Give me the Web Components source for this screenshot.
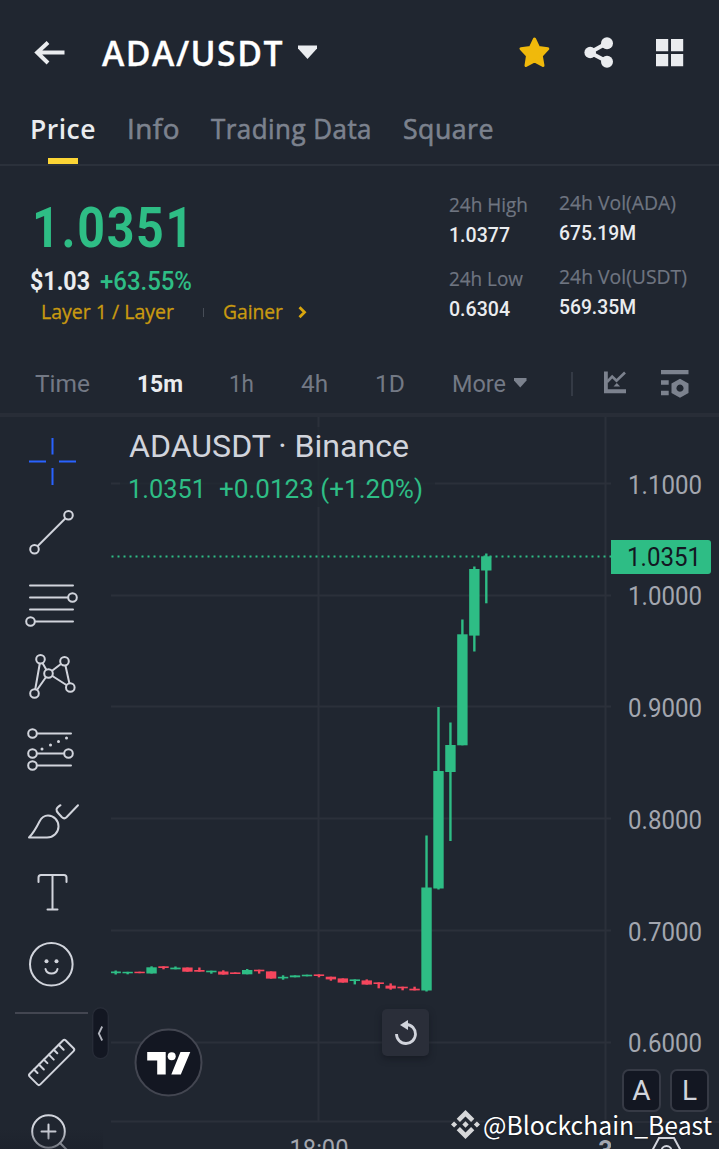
<!DOCTYPE html>
<html lang="en">
<head>
<meta charset="utf-8">
<title>ADA/USDT</title>
<style>
  html, body {
    margin: 0;
    background: #202630;
  }
  body {
    width: 719px;
    height: 1149px;
    overflow: hidden;
    font-family: "Open Sans", "Noto Sans", sans-serif;
    color: #eaecef;
  }
</style>
</head>
<body>
<trade-page></trade-page>

<script>
// Text that is squeezed or stretched to a fixed width
class FitText extends HTMLElement {
  constructor() {
    super();
    this.attachShadow({ mode: 'open' });
  }

  connectedCallback() {
    const width = +this.getAttribute('w');
    this.shadowRoot.innerHTML = /* html */`
    <style>
      :host { display: block; flex: none; width: ${width}px; white-space: nowrap; }
      span { display: inline-block; vertical-align: top; transform-origin: 0 50%; }
    </style>
    <span><slot></slot></span>`;
    const span = this.shadowRoot.querySelector('span');
    const natural = span.getBoundingClientRect().width;
    if (natural) span.style.transform = `scaleX(${width / natural})`;
  }
}

class TopBar extends HTMLElement {
  constructor() {
    super();
    this.attachShadow({ mode: 'open' });
  }

  connectedCallback() {
    this.shadowRoot.innerHTML = /* html */`
    <style>
      :host { display: flex; align-items: center; height: 105px; padding: 0 34px; fill: #eaecef; }
      svg { display: block; flex: none; }
      fit-text { margin: 0 14px 0 36px; font-size: 34px; font-weight: 600; line-height: 48px; letter-spacing: 1.500px; color: #fff; -webkit-text-stroke: .300px; }
      .actions { display: flex; align-items: center; gap: 34px; margin-left: auto; }
    </style>
    <svg width="32" height="24" viewBox="0 0 32 24" fill="none" stroke="#eaecef" stroke-width="4"><path d="M30.500 11.500H4M14 1.500 3.200 11.500 14 22"/></svg>
    <fit-text w="182">ADA/USDT</fit-text>
    <svg width="20" height="16" viewBox="0 0 20 16"><path d="M0 .500h19v3L9.500 14 0 3.500z"/></svg>
    <div class="actions">
      <svg width="32" height="32" viewBox="0 0 32 32"><path fill="#f0b90b" stroke="#f0b90b" stroke-width="3" stroke-linejoin="round" d="m16.500 2 4 8.500 9.300 1.200-6.500 7 1.700 9.800L16.500 24 8 28.500l1.500-9.800-6.500-7 9.500-1.200z"/></svg>
      <svg width="30" height="32" viewBox="0 0 30 32"><path d="M6 15.500 23 6M6 15.500l17 9" stroke="#eaecef" stroke-width="4"/><circle cx="6.200" cy="15.500" r="5.800"/><circle cx="23" cy="6.200" r="6"/><circle cx="23" cy="24.800" r="6"/></svg>
      <svg width="37" height="28" viewBox="-8 0 37 28"><path d="M0 0h12.200v12.200H0zM15 0h12.200v12.200H15zM0 15h12.200v12.200H0zM15 15h12.200v12.200H15z"/></svg>
    </div>`;
  }
}

class TabItem extends HTMLElement {
  constructor() {
    super();
    this.attachShadow({ mode: 'open' });
  }

  connectedCallback() {
    this.shadowRoot.innerHTML = /* html */`
    <style>
      :host { display: flex; flex-direction: column; align-items: center; color: #7c828e; }
      :host([active]) { color: #eaecef; }
      fit-text { height: 47px; line-height: 47px; font-size: 27px; font-weight: 500; letter-spacing: .500px; -webkit-text-stroke: .600px; }
      :host([active]) fit-text { font-weight: 600; -webkit-text-stroke: 0; }
      i { display: none; width: 30px; height: 6px; margin-top: 6px; background: #fcd535; }
      :host([active]) i { display: block; }
    </style>
    <fit-text w="${this.getAttribute('w')}">${this.textContent}</fit-text>
    <i></i>`;
  }
}

class PriceSummary extends HTMLElement {
  constructor() {
    super();
    this.attachShadow({ mode: 'open' });
  }

  stat(label, labelWidth, value, valueWidth) {
    return `<fit-text class="label" w="${labelWidth}">${label}</fit-text>
      <fit-text class="value" w="${valueWidth}">${value}</fit-text>`;
  }

  connectedCallback() {
    this.shadowRoot.innerHTML = /* html */`
    <style>
      :host { display: flex; height: 161px; padding: 28px 0 0 30px; }
      .left { width: 419px; }
      .price { height: 67px; padding-left: 2px; color: #2ebd85; font: 700 56px/68px Roboto, sans-serif; letter-spacing: 2px; }
      .change { display: flex; gap: 10px; height: 41px; font: 700 25px/42px Roboto, sans-serif; }
      .change .up { font-weight: 500; color: #2ebd85; }
      .tags { display: flex; align-items: center; height: 21px; padding-left: 11px; font-size: 19.500px; font-weight: 500; line-height: 20px; color: #c99a10; -webkit-text-stroke: .300px; }
      .tags fit-text { margin-top: -1px; }
      .tags i { width: 1px; height: 9px; margin: 0 19px 0 29px; background: #474d57; }
      .tags svg { margin: -1px 0 0 15px; }
      .col { display: flex; flex-direction: column; margin-top: -3px; }
      .col + .col { margin: -5.500px 0 0 31px; }
      .label { font-size: 19.500px; line-height: 28px; height: 29px; color: #6f7581; -webkit-text-stroke: .200px; }
      .value { font: 500 20px/30px Roboto, sans-serif; height: 29px; }
      .value:nth-of-type(2) { margin-bottom: 16px; }
    </style>
    <div class="left">
      <div class="price"><fit-text w="163">1.0351</fit-text></div>
      <div class="change"><fit-text w="60">$1.03</fit-text><fit-text class="up" w="92">+63.55%</fit-text></div>
      <div class="tags">
        <fit-text w="133">Layer 1 / Layer</fit-text><i></i><fit-text w="60">Gainer</fit-text>
        <svg width="10" height="14" viewBox="0 0 10 14" fill="none" stroke="#d9a60e" stroke-width="2.800"><path d="m1.500 2.200 5 5-5 5"/></svg>
      </div>
    </div>
    <div class="col">
      ${this.stat('24h High', 79, '1.0377', 61)}
      ${this.stat('24h Low', 74, '0.6304', 61)}
    </div>
    <div class="col">
      ${this.stat('24h Vol(ADA)', 117, '675.19M', 77)}
      ${this.stat('24h Vol(USDT)', 128, '569.35M', 77)}
    </div>`;
  }
}

class IntervalBar extends HTMLElement {
  constructor() {
    super();
    this.attachShadow({ mode: 'open' });
  }

  connectedCallback() {
    this.shadowRoot.innerHTML = /* html */`
    <style>
      :host { display: flex; align-items: center; height: 58px; padding-left: 35px; border-bottom: 4px solid #282d37; font: 400 24px/60px Roboto, sans-serif; color: #737985; fill: #7c828e; }
      b { display: block; margin: 0 46px 0 47px; color: #eaecef; }
      fit-text + fit-text { margin-left: 47px; }
      svg { flex: none; }
      .caret { margin: -3px 44px 0 8px; }
      i { width: 2px; height: 24px; background: #343a45; }
      .chart { margin: -3px 34px 0 31px; }
    </style>
    <fit-text w="55">Time</fit-text>
    <b><fit-text w="46">15m</fit-text></b>
    <fit-text w="25">1h</fit-text>
    <fit-text w="27">4h</fit-text>
    <fit-text w="30">1D</fit-text>
    <fit-text w="54">More</fit-text>
    <svg class="caret" width="13" height="10" viewBox="0 0 13 10"><path d="M0 0h12.500v2.500L6.250 9.500 0 2.500z"/></svg>
    <i></i>
    <svg class="chart" width="23" height="23" viewBox="0 0 23 23"><path d="M0 .500h3.800v17.700H22v4H0z"/><path d="m3 11 5.200-5.500 4.300 4.200L21 1.500" fill="none" stroke="#7c828e" stroke-width="2.600"/><path d="m9.500 15.500 3.300-3.500 3.300 3.500z"/></svg>
    <svg width="28" height="29" viewBox="0 .7 28 29"><path d="M0 0h27.500v5H0zM0 11h7.700v4.500H0zM0 21.500h7.700v4.500H0z"/><path fill-rule="evenodd" d="m19 9.500 8.500 4.800v9.400L19 28.500l-8.500-4.800v-9.400zm0 5.800a3.600 3.600 0 1 0 .01 0z"/></svg>`;
  }
}

class DrawingToolbar extends HTMLElement {
  constructor() {
    super();
    this.attachShadow({ mode: 'open' });
  }

  tool(shapes) {
    return `<svg width="104" height="72" viewBox="0 0 104 72">${shapes}</svg>`;
  }

  knob(x, y) {
    return `<circle cx="${x}" cy="${y}" r="4.300" fill="#202630"/>`;
  }

  connectedCallback() {
    const k = this.knob;
    this.shadowRoot.innerHTML = /* html */`
    <style>
      :host { display: block; position: relative; height: 724px; padding-top: 8px; overflow: hidden; }
      svg { display: block; fill: none; stroke: #d1d4dc; stroke-width: 2; stroke-linecap: round; stroke-linejoin: round; }
      hr { width: 73px; height: 2px; margin: 11px 0 12px 15px; border: 0; background: #434651; }
      .fade { position: absolute; left: 0; bottom: 0; width: 103px; height: 20px; background: linear-gradient(#20263000, #1b202a90); }
    </style>
    ${this.tool('<path stroke="#2962ff" stroke-linecap="butt" d="M52.500 13v16.500M52.500 43v17M29 36.500h17M59 36.500h17"/>')}
    ${this.tool(`<path d="m34.500 52.300 34-34"/>${k(34.5, 52.3)}${k(68.5, 18.3)}`)}
    ${this.tool(`<path d="M30 16.500h43M30 28.500h38M30 40.500h43M35 52.500h38"/>${k(72.5, 28.5)}${k(30.5, 52.5)}`)}
    ${this.tool(`<path d="m34.500 52.500 6-34 8 14 16-12.200 5.800 26.200-21.800-14z"/>${k(40.5, 18.3)}${k(64.5, 20.3)}${k(48.5, 32.5)}${k(34.5, 52.5)}${k(70.3, 46.5)}`)}
    ${this.tool(`<path d="M36 20.500h35M36 40.500h30M36 52.500h35"/><path stroke-width="3" d="M42 36h.01M50.500 32h.01M58.500 28.500h.01M66.500 25h.01"/>${k(32.5, 20.5)}${k(32.5, 40.5)}${k(68.5, 40.5)}${k(32.5, 52.5)}`)}
    ${this.tool('<path d="M29 52.500c5-5 7.500-10 10.500-16 2-4 4.500-6 8.500-6 6 0 10.500 5 10.500 11s-5 11-11.500 11zM60.500 20.200c-5 3.300-5 5-2 8.300l3.500 3.800c1.500 1.500 3 1.500 4.500 0L78 20.200"/>')}
    ${this.tool('<path d="M38.500 25v-4.500c0-1.800.8-2.500 2.500-2.500h23c1.700 0 2.500.7 2.500 2.500V25M52.500 18v34.500M47.500 52.500h10"/>')}
    ${this.tool('<circle cx="51.300" cy="35.300" r="21.300"/><path d="M45.500 40c1.500 6 10.500 6 12 0"/><g fill="#d1d4dc" stroke="none"><circle cx="46.500" cy="32.300" r="2"/><circle cx="56.500" cy="32.300" r="2"/></g>')}
    <hr>
    ${this.tool('<g transform="rotate(-45 51.500 36.300)"><rect x="26" y="29" width="51" height="15" rx="2"/><path d="M34 29v5M41 29v7M48 29v5M55 29v7M62 29v5M69 29v7"/></g>')}
    ${this.tool('<circle cx="48.500" cy="33.500" r="16.300"/><path d="M41.500 33.500h14M48.500 26.500v14M60 45l8 8"/>')}
    <div class="fade"></div>`;
  }
}

class CandleChart extends HTMLElement {
  constructor() {
    super();
    this.attachShadow({ mode: 'open' });
  }

  // [colour, body top, body bottom, wick top, wick bottom]
  static get candles() {
    return [
      ['g', 971.5, 973.2, 970.5, 974.5], ['g', 971.8, 973.3, 971.8, 974.3], ['r', 971.7, 973.2],
      ['g', 967.3, 973.5, 966.3], ['r', 966.3, 968, 966.3, 969.3], ['g', 967.6, 969.3, 966.5],
      ['r', 967.5, 971.7], ['r', 970, 971.7, 967.5], ['g', 970.7, 972.3, 970.7, 973.7],
      ['r', 971.5, 974.6, 970.3], ['r', 972.4, 974], ['g', 970, 974.3, 969],
      ['r', 969.7, 971.3, 969.7, 973.6], ['r', 971.4, 978.6], ['g', 976.8, 978.4, 975.3, 979.7],
      ['g', 975.4, 977.3], ['g', 974.7, 976.3], ['r', 974.4, 976, 974.4, 977.3],
      ['r', 976.7, 979.4, 976.7, 980.7], ['r', 978.4, 982.6], ['g', 979.4, 981, 979.4, 984.4],
      ['r', 980.4, 984.6, 979.4], ['r', 982.4, 984, 982.4, 988.3], ['r', 985.6, 988.6, 983.4, 989.7],
      ['r', 986.7, 988.3, 986.7, 990.3], ['r', 988.7, 990.4, 986.7], ['g', 887.5, 990.5, 835.5, 991.5],
      ['g', 771, 888.5, 707, 889.5], ['g', 745, 772, 722.5, 841], ['g', 634.3, 745.3, 619.5],
      ['g', 569, 635.6, 566.5, 651.5], ['g', 556.3, 570.5, 553.5, 603.3],
    ];
  }

  prepareCandles() {
    return CandleChart.candles.map(([color, top, bottom, high = top, low = bottom], i) => {
      const x = 115.7 + i * 11.955;
      return `<g fill="${color === 'g' ? '#2ebd85' : '#f6465d'}">
        <rect x="${x - 1.2}" y="${high}" width="2.4" height="${low - high}"/>
        <rect x="${x - 5.2}" y="${top}" width="10.4" height="${bottom - top}"/></g>`;
    }).join('');
  }

  connectedCallback() {
    this.shadowRoot.innerHTML = /* html */`
    <style>
      :host { display: block; position: relative; }
      svg { display: block; }
      .legend { position: absolute; left: 16px; top: 10px; padding-left: 8px; width: 307px; height: 80px; background: #202630c0; font-family: Roboto, sans-serif; }
      .name { height: 39px; font-size: 30.500px; line-height: 40px; color: #d1d4dc; padding-left: 1px; }
      .values { display: flex; gap: 13px; font-size: 25.500px; line-height: 46px; color: #2ebd85; }
      .reset { position: absolute; left: 278px; top: 592px; width: 47px; height: 47px; border-radius: 5px; background: #2a2e39; box-shadow: 0 3px 6px #12161e99; }
      .toggle { position: absolute; left: -12px; top: 590px; }
      .logo { position: absolute; left: 30px; top: 611px; }
    </style>
    <svg width="507" height="732" viewBox="104 417 507 732">
      <path stroke="#2b303a" stroke-width="2" d="M318.500 417v704M605.500 417v704M111 483.500h500M111 595.500h500M111 706.500h500M111 818.500h500M111 930.500h500M111 1042.500h500M111 1121.500h500"/>
      <path stroke="#2ebd85" stroke-width="2" stroke-dasharray="2 4" d="M111.500 556.500h500"/>
      <svg x="111" y="417" width="500" height="732" viewBox="111 417 500 732">${this.prepareCandles()}</svg>
      <g font-family="Roboto, sans-serif" font-size="25" fill="#a3a6af" text-anchor="middle">
        <text x="319" y="1158" textLength="59" lengthAdjust="spacingAndGlyphs">18:00</text>
        <text x="605.500" y="1159" font-weight="700">3</text>
      </g>
    </svg>
    <div class="legend">
      <div class="name"><fit-text w="280">ADAUSDT · Binance</fit-text></div>
      <div class="values"><fit-text w="78">1.0351</fit-text><fit-text w="204">+0.0123 (+1.20%)</fit-text></div>
    </div>
    <div class="reset">
      <svg width="47" height="47" viewBox="0 0 47 47"><path d="M24.500 15.500a9.500 9.500 0 1 1-10 9.500" fill="none" stroke="#d1d4dc" stroke-width="2.800"/><path fill="#d1d4dc" d="m18 16 8-5v10z"/></svg>
    </div>
    <svg class="toggle" width="17" height="53" viewBox="0 0 17 53"><rect x=".700" y=".700" width="15.600" height="51" rx="7.800" fill="#131722" stroke="#272c37" stroke-width="1.400"/><path d="m10.200 19.500-3.400 7 3.400 7" fill="none" stroke="#b2b5be" stroke-width="1.800"/></svg>
    <svg class="logo" width="69" height="69" viewBox="0 0 69 69"><circle cx="34.500" cy="34.500" r="33" fill="#131722" stroke="#434651" stroke-width="2"/><path fill="#fff" d="M13.200 24h18.500v22.500h-8.500V32.500h-10zM46.500 24h9.800l-9.500 22.500h-9.500z"/><circle cx="37.700" cy="28.300" r="4" fill="#fff"/></svg>`;
  }
}

class PriceAxis extends HTMLElement {
  constructor() {
    super();
    this.attachShadow({ mode: 'open' });
  }

  connectedCallback() {
    const prices = ['1.1000', '1.0000', '0.9000', '0.8000', '0.7000', '0.6000'];
    this.shadowRoot.innerHTML = /* html */`
    <style>
      :host { display: block; position: relative; height: 732px; font: 400 25px/111.800px Roboto, sans-serif; color: #a3a6af; overflow: hidden; }
      .prices { display: flex; flex-direction: column; box-sizing: border-box; height: 706px; padding: 12.500px 0 0 16.500px; border-bottom: 2px solid #292e38; }
      .prices fit-text { height: 111.800px; }
      .tag { position: absolute; left: 0; top: 123px; width: 84px; height: 33.500px; line-height: 36px; padding-left: 16px; border-radius: 0 3px 3px 0; background: #2ebd85; color: #131722; }
      .modes { position: absolute; left: 11px; top: 652px; display: flex; gap: 9px; }
      .modes span { box-sizing: border-box; width: 39px; height: 43px; border: 2px solid #363a45; border-radius: 7px; background: #131722; color: #d1d4dc; font-size: 28px; line-height: 39px; text-align: center; }
      svg { position: absolute; left: 39px; top: 719px; }
    </style>
    <div class="prices">${prices.map(p => `<fit-text w="74">${p}</fit-text>`).join('')}</div>
    <div class="tag"><fit-text w="74">1.0351</fit-text></div>
    <div class="modes"><span>A</span><span>L</span></div>
    <svg width="34" height="26" viewBox="0 0 34 26" fill="none" stroke="#d1d4dc" stroke-width="2"><path d="m2 15 7-13h15l7 13-7 13H9z"/><circle cx="16.500" cy="15" r="5"/></svg>`;
  }
}

class WaterMark extends HTMLElement {
  constructor() {
    super();
    this.attachShadow({ mode: 'open' });
  }

  connectedCallback() {
    this.shadowRoot.innerHTML = /* html */`
    <style>
      :host { display: flex; align-items: center; gap: 3px; font: 400 25px/28px "Noto Sans CJK SC", sans-serif; color: #fff; text-shadow: 0 0 2px #0008; }
      fit-text { margin-top: -2px; }
    </style>
    <svg width="29" height="29" viewBox="0 0 28 28" fill="#d6d7d9"><path d="m14 0 8.500 8.500-3.100 3.100L14 6.200l-5.400 5.400-3.100-3.100zM14 28l8.500-8.500-3.100-3.100-5.400 5.400-5.400-5.400-3.100 3.100zM3 11l3 3-3 3-3-3zM25 11l3 3-3 3-3-3zM14 10.900l3.100 3.100-3.100 3.100-3.100-3.100z"/></svg>
    <fit-text w="229">@Blockchain_Beast</fit-text>`;
  }
}

class TradePage extends HTMLElement {
  constructor() {
    super();
    this.attachShadow({ mode: 'open' });
  }

  connectedCallback() {
    this.shadowRoot.innerHTML = /* html */`
    <style>
      :host { display: block; position: relative; width: 719px; height: 1149px; overflow: hidden; }
      nav { display: flex; gap: 31px; height: 59px; padding-left: 30px; border-bottom: 2px solid #2b313b; }
      main { display: grid; grid-template-columns: 104px 507px 108px; height: 732px; }
      main > * { min-width: 0; }
      water-mark { position: absolute; left: 451px; top: 1110px; }
    </style>
    <top-bar></top-bar>
    <nav>
      <tab-item w="66" active>Price</tab-item>
      <tab-item w="53">Info</tab-item>
      <tab-item w="161">Trading Data</tab-item>
      <tab-item w="91">Square</tab-item>
    </nav>
    <price-summary></price-summary>
    <interval-bar></interval-bar>
    <main>
      <drawing-toolbar></drawing-toolbar>
      <candle-chart></candle-chart>
      <price-axis></price-axis>
    </main>
    <water-mark></water-mark>`;
  }
}

customElements.define('fit-text', FitText);
customElements.define('top-bar', TopBar);
customElements.define('tab-item', TabItem);
customElements.define('price-summary', PriceSummary);
customElements.define('interval-bar', IntervalBar);
customElements.define('drawing-toolbar', DrawingToolbar);
customElements.define('candle-chart', CandleChart);
customElements.define('price-axis', PriceAxis);
customElements.define('water-mark', WaterMark);
customElements.define('trade-page', TradePage);
</script>
</body>
</html>
